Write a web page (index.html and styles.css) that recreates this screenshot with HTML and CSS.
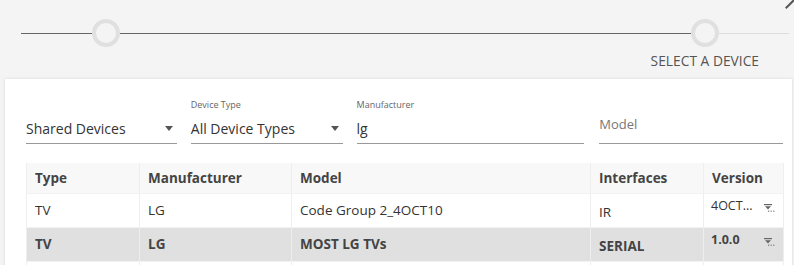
FILE: index.html
```html
<!DOCTYPE html>
<html lang="en">
<head>
    <meta charset="UTF-8">
    <meta name="viewport" content="width=device-width, initial-scale=1.0">
    <title>Select a Device</title>
    <link rel="stylesheet" href="styles.css">
</head>
<body>
    <div class="wizard">
        <span class="close-mark"></span>
        <div class="stepper">
            <div class="seg seg-first"></div>
            <div class="dot"></div>
            <div class="seg seg-fill"></div>
            <div class="dot"></div>
            <div class="seg seg-last"></div>
        </div>
        <div class="step-labels">
            <span>SELECT A DEVICE</span>
        </div>

        <div class="card">
            <div class="filters">
                <div class="field field-shared">
                    <div class="field-label"></div>
                    <div class="field-box">
                        <span>Shared Devices</span>
                        <span class="caret"></span>
                    </div>
                </div>
                <div class="field field-type">
                    <div class="field-label">Device Type</div>
                    <div class="field-box">
                        <span>All Device Types</span>
                        <span class="caret"></span>
                    </div>
                </div>
                <div class="field field-maker">
                    <div class="field-label">Manufacturer</div>
                    <div class="field-box">
                        <span>lg</span>
                    </div>
                </div>
                <div class="field field-model">
                    <div class="field-label"></div>
                    <div class="field-box placeholder">
                        <span>Model</span>
                    </div>
                </div>
            </div>

            <table class="devices">
                <thead>
                    <tr>
                        <th class="c-type">Type</th>
                        <th class="c-maker">Manufacturer</th>
                        <th class="c-model">Model</th>
                        <th class="c-iface">Interfaces</th>
                        <th class="c-ver">Version</th>
                    </tr>
                </thead>
                <tbody>
                    <tr>
                        <td>TV</td>
                        <td>LG</td>
                        <td>Code Group 2_4OCT10</td>
                        <td class="low">IR</td>
                        <td class="ver">
                            <div class="ver-select">
                                <span>4OCT...</span>
                                <svg width="11" height="8" viewBox="0 0 11 8"><rect x="0" y="0" width="8" height="1.2" fill="#666"/><path d="M1 2.2h6L4 5.4z" fill="#666"/><rect x="4" y="6.6" width="1.2" height="1.2" fill="#777"/><rect x="6.6" y="6.6" width="1.2" height="1.2" fill="#777"/><rect x="9.2" y="6.6" width="1.2" height="1.2" fill="#777"/></svg>
                            </div>
                        </td>
                    </tr>
                    <tr class="selected">
                        <td>TV</td>
                        <td>LG</td>
                        <td>MOST LG TVs</td>
                        <td class="low">SERIAL</td>
                        <td class="ver">
                            <div class="ver-select">
                                <span>1.0.0</span>
                                <svg width="11" height="8" viewBox="0 0 11 8"><rect x="0" y="0" width="8" height="1.2" fill="#666"/><path d="M1 2.2h6L4 5.4z" fill="#666"/><rect x="4" y="6.6" width="1.2" height="1.2" fill="#777"/><rect x="6.6" y="6.6" width="1.2" height="1.2" fill="#777"/><rect x="9.2" y="6.6" width="1.2" height="1.2" fill="#777"/></svg>
                            </div>
                        </td>
                    </tr>
                    <tr class="spacer">
                        <td></td><td></td><td></td><td></td><td></td>
                    </tr>
                </tbody>
            </table>
        </div>
    </div>
</body>
</html>
```

FILE: styles.css
```css
body {
    margin: 0;
    background-color: #f4f4f4;
    font-family: "Open Sans", "Liberation Sans", Arial, sans-serif;
    color: #333;
    overflow: hidden;
}
.wizard {
    position: relative;
    height: 265px;
    overflow: hidden;
}
.close-mark {
    position: absolute;
    right: -2px;
    top: 3px;
    width: 12px;
    height: 2px;
    background-color: #555;
    transform: rotate(-45deg);
}
.stepper {
    display: flex;
    align-items: center;
    padding: 19px 0 0 21px;
}
.seg {
    height: 1px;
    background-color: #666;
}
.seg-first {
    width: 71px;
}
.seg-fill {
    flex: 1;
}
.seg-last {
    width: 70px;
    margin-right: 5px;
    background-color: #dcdcdc;
}
.dot {
    width: 20px;
    height: 20px;
    border: 4px solid #e0e0e0;
    border-radius: 50%;
    background-color: #f4f4f4;
}
.step-labels {
    display: flex;
    justify-content: flex-end;
    padding: 6px 35px 0 0;
    font-size: 13.8px;
    line-height: 16px;
    color: #555;
}
.card {
    margin: 10px 2px 0 5px;
    padding: 20px 9px 0 21px;
    background-color: #fff;
    box-shadow: 0 0 3px rgba(0, 0, 0, 0.12);
    height: 170px;
    overflow: hidden;
}
.filters {
    display: flex;
    align-items: flex-end;
}
.field {
    margin-right: 14px;
}
.field-shared {
    width: 151px;
}
.field-type {
    width: 152px;
}
.field-maker {
    width: 228px;
    margin-right: 15px;
}
.field-model {
    width: 184px;
    margin-right: 0;
}
.field-label {
    font-size: 9px;
    line-height: 12px;
    height: 12px;
    color: #666;
}
.field-box {
    display: flex;
    align-items: center;
    justify-content: space-between;
    height: 29px;
    padding-top: 3px;
    border-bottom: 1px solid #999;
    font-size: 14px;
    color: #333;
}
.placeholder {
    align-items: flex-start;
    padding-top: 4px;
    height: 28px;
    font-size: 13px;
    color: #777;
}
.caret {
    width: 0;
    height: 0;
    margin-right: 4px;
    border-left: 4.5px solid transparent;
    border-right: 4.5px solid transparent;
    border-top: 5px solid #555;
}
.devices {
    margin-top: 19px;
    width: 757px;
    table-layout: fixed;
    border-collapse: collapse;
    font-size: 13.5px;
}
.devices th,
.devices td {
    box-sizing: border-box;
    padding: 0 8px;
    text-align: left;
    white-space: nowrap;
    border-left: 1px solid #eee;
    border-right: 1px solid #eee;
    border-bottom: 1px solid #f2f2f2;
}
.devices th {
    height: 30px;
    background-color: #f8f8f8;
    color: #444;
    font-weight: 700;
}
.devices td {
    height: 34px;
    color: #333;
}
.c-type {
    width: 113px;
}
.c-maker {
    width: 152px;
}
.c-model {
    width: 299px;
}
.c-iface {
    width: 113px;
}
.c-ver {
    width: 80px;
}
.devices td.low {
    padding-top: 3px;
}
.devices td.ver {
    vertical-align: top;
    padding: 3px 8px 0 7px;
}
.ver-select {
    display: flex;
    justify-content: space-between;
    align-items: center;
    height: 18px;
    font-size: 12.5px;
}
.ver-select svg {
    margin-top: 4px;
}
.selected td {
    background-color: #e0e0e0;
    font-weight: 700;
    color: #444;
}
.spacer td {
    height: 12px;
}
```
